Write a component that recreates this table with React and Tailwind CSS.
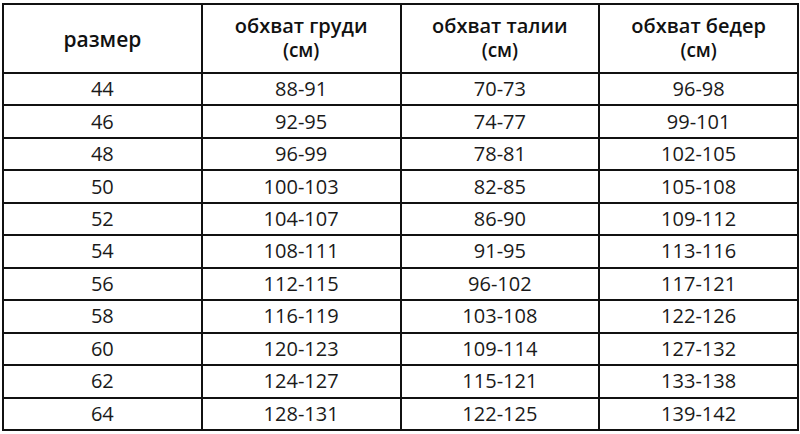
import React from 'react';

const rows = [
    ['44', '88-91', '70-73', '96-98'],
    ['46', '92-95', '74-77', '99-101'],
    ['48', '96-99', '78-81', '102-105'],
    ['50', '100-103', '82-85', '105-108'],
    ['52', '104-107', '86-90', '109-112'],
    ['54', '108-111', '91-95', '113-116'],
    ['56', '112-115', '96-102', '117-121'],
    ['58', '116-119', '103-108', '122-126'],
    ['60', '120-123', '109-114', '127-132'],
    ['62', '124-127', '115-121', '133-138'],
    ['64', '128-131', '122-125', '139-142'],
];

const heads = ['обхват груди', 'обхват талии', 'обхват бедер'];

const App = () => {
    return (
        <div className='w-[800px] h-[434px] bg-white pt-[3px] pl-[2px]' style={{ fontFamily: '"Open Sans", sans-serif' }}>
            <div className='w-[797px] h-[428px] bg-[#111] p-[2px] grid grid-cols-4 grid-rows-[67px_repeat(11,1fr)] gap-[2px]'>
                <div className='bg-white flex items-center justify-center'>
                    <span className='text-[21px] font-semibold text-[#111] mt-[2px]'>размер</span>
                </div>
                {heads.map((h) => (
                    <div key={h} className='bg-white flex flex-col items-center justify-center leading-[25px] text-[#111] pb-[1px]'>
                        <span className='text-[20px] font-semibold'>{h}</span>
                        <span className='text-[19px] font-semibold'>(см)</span>
                    </div>
                ))}
                {rows.map((r) =>
                    r.map((c, i) => (
                        <div key={r[0] + '-' + i} className='bg-white flex items-center justify-center text-[20px] text-[#1a1a1a] leading-none'>
                            <span>{c}</span>
                        </div>
                    ))
                )}
            </div>
        </div>
    );
};

export default App;
